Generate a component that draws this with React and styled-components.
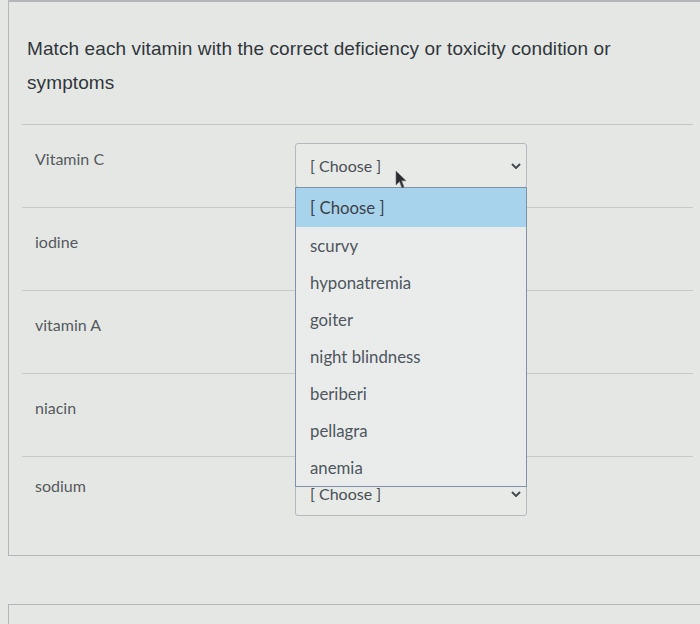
import React from 'react';
import styled, { createGlobalStyle } from 'styled-components';

const GlobalStyle = createGlobalStyle`
  html, body {
    margin: 0;
    padding: 0;
    background: #e5e7e4;
  }
`;

// open: the Vitamin C select has its menu showing
// covered: selects that sit behind that menu
const pairs = [
  { label: 'Vitamin C', open: true },
  { label: 'iodine', covered: true },
  { label: 'vitamin A', covered: true },
  { label: 'niacin', covered: true },
  { label: 'sodium', last: true },
];

const options = [
  '[ Choose ]',
  'scurvy',
  'hyponatremia',
  'goiter',
  'night blindness',
  'beriberi',
  'pellagra',
  'anemia',
];

const Chevron = () => (
  <ChevronIcon viewBox="0 0 10 6" width="10" height="6">
    <polyline points="1,1 5,5 9,1" fill="none" stroke="#454a50" strokeWidth="2" />
  </ChevronIcon>
);

const Pointer = () => (
  <Cursor viewBox="0 0 12 20" width="12" height="20">
    <path d="M1 1 L1 15 L4.5 11.5 L7 18 L9 17 L6.6 10.8 L11 10.8 Z" fill="#2a2c2f" stroke="#6b6e72" strokeWidth="0.6" />
  </Cursor>
);

const App = () => {
  return (
    <Page>
      <GlobalStyle />
      <Card>
        <Question>
          Match each vitamin with the correct deficiency or toxicity condition or symptoms
        </Question>
        <MatchList>
          {pairs.map((p) => (
            <MatchRow key={p.label}>
              <Label $tight={p.last}>{p.label}</Label>
              <SelectCell $tight={p.last}>
                <SelectBox>
                  {!p.covered && (
                    <>
                      <SelectText>[ Choose ]</SelectText>
                      <Chevron />
                    </>
                  )}
                  {p.open && (
                    <>
                      <Pointer />
                      <OptionList>
                        {options.map((o, i) => (
                          <Option key={o} $active={i === 0}>
                            {o}
                          </Option>
                        ))}
                      </OptionList>
                    </>
                  )}
                </SelectBox>
              </SelectCell>
            </MatchRow>
          ))}
        </MatchList>
      </Card>
      <NextCard />
    </Page>
  );
};

export default App;

const Page = styled.div`
  height: 624px;
  overflow: hidden;
  background: #e5e7e4;
`;

const Card = styled.div`
  margin-left: 8px;
  border-top: 2px solid #b3b7ba;
  border-left: 1px solid #b3b7ba;
  border-bottom: 1px solid #b3b7ba;
  padding: 30px 7px 16px 13px;
  box-sizing: border-box;
  height: 556px;
`;

const Question = styled.p`
  margin: 0 0 24px;
  padding-left: 5px;
  padding-right: 60px;
  font-family: 'Liberation Sans', Arial, sans-serif;
  font-size: 19px;
  letter-spacing: 0.1px;
  line-height: 34px;
  color: #30363c;
`;

const MatchList = styled.div`
  border-top: 1px solid #c3c7c8;
`;

const MatchRow = styled.div`
  display: flex;
  height: 83px;
  box-sizing: border-box;
  border-bottom: 1px solid #c6cacb;

  &:last-child {
    border-bottom: none;
  }
`;

const Label = styled.div`
  width: 273px;
  padding: ${(p) => (p.$tight ? '20px' : '25px')} 0 0 13px;
  box-sizing: border-box;
  font-family: Lato, 'Noto Sans', sans-serif;
  font-size: 16px;
  line-height: 18px;
  color: #555a60;
`;

const SelectCell = styled.div`
  padding-top: ${(p) => (p.$tight ? '14px' : '18px')};
`;

const SelectBox = styled.div`
  position: relative;
  width: 232px;
  height: 45px;
  box-sizing: border-box;
  border: 1px solid #b4b9bd;
  border-radius: 3px;
  background: #e8eae8;
  display: flex;
  align-items: center;
  justify-content: space-between;
  padding: 0 5px 0 14px;
`;

const SelectText = styled.span`
  font-family: Lato, 'Noto Sans', sans-serif;
  font-size: 16px;
  color: #4a5057;
`;

const ChevronIcon = styled.svg`
  display: block;
`;

const Cursor = styled.svg`
  position: absolute;
  left: 99px;
  top: 26px;
  z-index: 3;
`;

const OptionList = styled.div`
  position: absolute;
  top: 100%;
  left: -1px;
  width: 232px;
  box-sizing: border-box;
  border: 1px solid #8292a6;
  background: #eaeceb;
  z-index: 2;
`;

const Option = styled.div`
  height: ${(p) => (p.$active ? '39px' : '37px')};
  display: flex;
  align-items: center;
  padding-left: 14px;
  font-family: Lato, 'Noto Sans', sans-serif;
  font-size: 16.8px;
  color: ${(p) => (p.$active ? '#3b4148' : '#4e565e')};
  background: ${(p) => (p.$active ? '#a8d3ed' : 'transparent')};
`;

const NextCard = styled.div`
  margin: 48px 0 0 8px;
  height: 40px;
  border-top: 1px solid #b3b7ba;
  border-left: 1px solid #b3b7ba;
`;
